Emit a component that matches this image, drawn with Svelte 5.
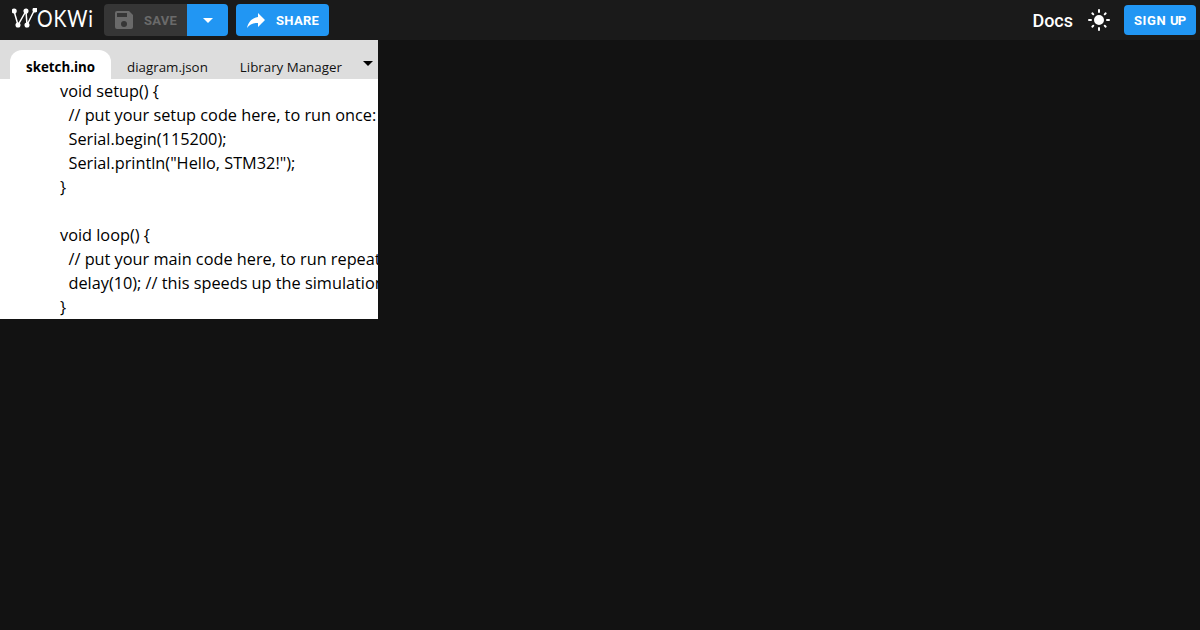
<script lang="ts">
	const codeLines = [
		'void setup() {',
		'  // put your setup code here, to run once:',
		'  Serial.begin(115200);',
		'  Serial.println("Hello, STM32!");',
		'}',
		'',
		'void loop() {',
		'  // put your main code here, to run repeatedly:',
		'  delay(10); // this speeds up the simulation',
		'}'
	];
	const tabs = ['sketch.ino', 'diagram.json', 'Library Manager'];
</script>

<div class="page">
	<header class="topbar">
		<a class="logo" href="/" aria-label="Wokwi">
			<svg width="25" height="24" viewBox="0 0 25 24" fill="none" stroke="#fff" stroke-width="1.5">
				<path d="M2 3 L6 17 L14 3 L15 17 L23 1" />
				<circle cx="2.2" cy="3" r="1.8" fill="#fff" />
				<circle cx="6" cy="17" r="1.8" fill="#fff" />
				<circle cx="14" cy="3" r="1.8" fill="#fff" />
				<circle cx="15" cy="17" r="1.8" fill="#fff" />
				<circle cx="23" cy="2" r="1.8" fill="#fff" />
			</svg>
			<span class="wordmark">OKWi</span>
		</a>
		<div class="save-group">
			<button class="save" disabled>
				<svg width="24" height="24" viewBox="0 0 24 24" fill="#6a6a6a">
					<path d="M17 3H5a2 2 0 0 0-2 2v14a2 2 0 0 0 2 2h14a2 2 0 0 0 2-2V7l-4-4zm-5 16a3 3 0 1 1 0-6 3 3 0 0 1 0 6zm3-10H5V5h10v4z" />
				</svg>
				<span>SAVE</span>
			</button>
			<button class="save-menu" aria-label="More">
				<svg width="24" height="24" viewBox="0 0 24 24" fill="#fff"><path d="M7 10l5 5 5-5z" /></svg>
			</button>
		</div>
		<button class="share">
			<svg width="24" height="24" viewBox="0 0 24 24" fill="#fff">
				<path d="M14 9V5l7 7-7 7v-4.1c-5 0-8.5 1.6-11 5.1 1-5 4-10 11-11z" />
			</svg>
			<span>SHARE</span>
		</button>
		<div class="spacer"></div>
		<a class="docs" href="/docs">Docs</a>
		<svg class="sun" width="24" height="24" viewBox="0 0 24 24" fill="#fff">
			<path d="M12 7a5 5 0 1 0 0 10 5 5 0 0 0 0-10zM2 13h2a1 1 0 0 0 0-2H2a1 1 0 0 0 0 2zm18 0h2a1 1 0 0 0 0-2h-2a1 1 0 0 0 0 2zM11 2v2a1 1 0 0 0 2 0V2a1 1 0 0 0-2 0zm0 18v2a1 1 0 0 0 2 0v-2a1 1 0 0 0-2 0zM5.99 4.58a1 1 0 0 0-1.41 1.41l1.06 1.06a1 1 0 0 0 1.41-1.41L5.99 4.58zm12.37 12.37a1 1 0 0 0-1.41 1.41l1.06 1.06a1 1 0 0 0 1.41-1.41l-1.06-1.06zm1.06-10.96a1 1 0 0 0-1.41-1.41l-1.06 1.06a1 1 0 0 0 1.41 1.41l1.06-1.06zM7.05 18.36a1 1 0 0 0-1.41-1.41l-1.06 1.06a1 1 0 0 0 1.41 1.41l1.06-1.06z" />
		</svg>
		<button class="signup">SIGN <span class="up">UP</span></button>
	</header>

	<section class="editor">
		<div class="tabs">
			{#each tabs as tab, i}
				<div class="tab" class:active={i === 0}>{tab}</div>
			{/each}
			<svg class="tabs-menu" width="24" height="24" viewBox="0 0 24 24" fill="#000"><path d="M7 10l5 5 5-5z" /></svg>
		</div>
		<div class="code">
			{#each codeLines as line}
				<div class="line">{line}</div>
			{/each}
		</div>
	</section>
</div>

<style>
	:global(body) {
		background: #121212;
	}

	.page {
		width: 1200px;
		height: 630px;
		overflow: hidden;
		background: #121212;
		font-family: 'Open Sans', sans-serif;
	}

	.topbar {
		display: flex;
		align-items: center;
		height: 40px;
		background: #1a1a1a;
		padding: 0 4px 0 12px;
		box-sizing: border-box;
		font-family: Roboto, sans-serif;
	}

	.logo {
		display: flex;
		align-items: center;
		width: 92px;
		flex-shrink: 0;
		color: #fff;
		text-decoration: none;
	}

	.wordmark {
		font-family: Lato, sans-serif;
		font-weight: 400;
		font-size: 23px;
		letter-spacing: 1px;
		white-space: nowrap;
		transform: translateY(-2px) scaleX(0.85);
		transform-origin: left center;
	}

	.save-group {
		display: flex;
		height: 32px;
	}

	button {
		border: 0;
		font-family: Roboto, sans-serif;
		font-weight: 700;
		font-size: 13px;
		letter-spacing: 0.3px;
		color: #fff;
		display: flex;
		align-items: center;
	}

	.save {
		width: 83px;
		padding: 0 0 0 8px;
		gap: 8px;
		background: #363636;
		color: #6a6a6a;
		border-radius: 4px 0 0 4px;
	}

	.save-menu {
		width: 41px;
		justify-content: center;
		padding: 0;
		background: #2196f3;
		border-radius: 0 4px 4px 0;
	}

	.share {
		height: 32px;
		width: 93px;
		margin-left: 8px;
		padding: 0 0 0 8px;
		gap: 8px;
		background: #2196f3;
		border-radius: 4px;
	}

	.spacer {
		flex: 1;
	}

	.docs {
		color: #fff;
		text-decoration: none;
		font-size: 18px;
		font-weight: 500;
	}

	.sun {
		margin: 0 13px 0 14px;
	}

	.signup {
		height: 30px;
		width: 72px;
		padding: 0 0 0 10px;
		letter-spacing: 0.6px;
		background: #2196f3;
		border-radius: 4px;
		white-space: pre;
	}

	.up {
		letter-spacing: -1px;
	}

	.editor {
		width: 378px;
		height: 279px;
		background: #fff;
		overflow: hidden;
	}

	.tabs {
		position: relative;
		display: flex;
		align-items: flex-end;
		height: 39px;
		padding-left: 10px;
		background: #ddd;
		box-sizing: border-box;
	}

	.tab {
		height: 29px;
		padding: 0 16px;
		line-height: 34px;
		font-size: 13.33px;
		color: #111;
		white-space: nowrap;
	}

	.tab.active {
		background: #fff;
		border-radius: 12px 12px 0 0;
		font-weight: 700;
		color: #000;
	}

	.tabs-menu {
		position: absolute;
		left: 356px;
		top: 11px;
	}

	.code {
		padding-left: 60px;
		font-size: 16.3px;
		line-height: 24px;
		color: #000;
		white-space: pre;
	}

	.line {
		height: 24px;
	}
</style>
